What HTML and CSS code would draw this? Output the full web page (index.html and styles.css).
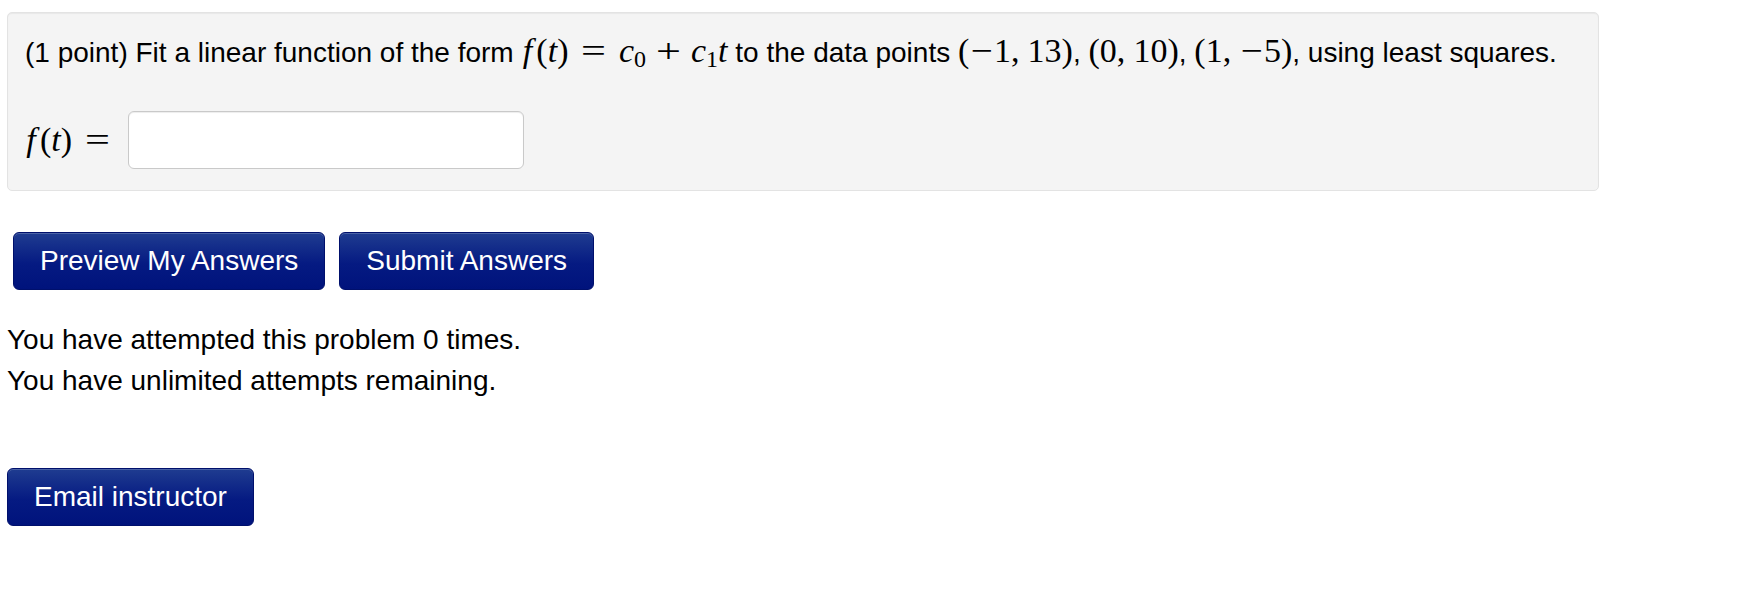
FILE: index.html
```html
<!DOCTYPE html>
<html lang="en">
<head>
  <meta charset="UTF-8" />
  <meta name="viewport" content="width=device-width, initial-scale=1.0"/>
  <title>Problem 1</title>
  <link rel="stylesheet" href="styles.css">
</head>
<body>
  <div class="page">
    <div class="problem">
      <p class="statement">(1 point) Fit a linear function of the form <span class="math"><i class="fn">f</i>(<i>t</i>)<span class="rel">=</span><i>c</i><sub>0</sub><span class="bin">+</span><i>c</i><sub>1</sub><i>t</i></span> to the data points <span class="math">(<span class="neg">−</span>1,<span class="thin"></span>13)</span>, <span class="math">(0,<span class="thin"></span>10)</span>, <span class="math">(1,<span class="thin"></span><span class="neg">−</span>5)</span>, using least squares.</p>
      <div class="answer-row">
        <span class="math"><i class="fn">f</i>(<i>t</i>)<span class="rel last">=</span></span>
        <input type="text" class="answer" aria-label="f(t)">
      </div>
    </div>

    <div class="actions">
      <button class="btn">Preview My Answers</button>
      <button class="btn">Submit Answers</button>
    </div>

    <div class="attempts">
      <p>You have attempted this problem 0 times.</p>
      <p>You have unlimited attempts remaining.</p>
    </div>

    <div class="email">
      <button class="btn">Email instructor</button>
    </div>
  </div>
</body>
</html>
```

FILE: styles.css
```css
body {
  margin: 0;
  background: #fff;
  color: #000;
  font-family: "Liberation Sans", Helvetica, Arial, sans-serif;
  font-size: 28px;
}
.page { padding: 12px 0 0 7px; }

.problem {
  box-sizing: border-box;
  width: 1592px;
  padding: 17px 18px 21px 17px;
  background: #f4f4f4;
  border: 1px solid #e3e3e3;
  border-radius: 5px;
  box-shadow: inset 0 1px 1px rgba(0, 0, 0, 0.05);
}
.statement { margin: 0; line-height: 41px; white-space: nowrap; }

/* typeset maths, roughly TeX spacing */
.math {
  font-family: "Liberation Serif", "Times New Roman", serif;
  font-size: 34px;
  white-space: nowrap;
}
.math i { font-style: italic; }
.math .fn { margin: 0 0.12em 0 0.04em; }
.math sub {
  font-size: 0.707em;
  vertical-align: -0.2em;
  line-height: 0;
}
.rel, .bin, .neg {
  display: inline-block;
  transform: scaleX(1.3);
}
.rel { margin: 0 0.46em; }
.rel.last { margin-right: 0.1em; }
.bin { margin: 0 0.38em; }
.neg { margin: 0 0.08em; transform: scaleX(1.15); }
.thin { display: inline-block; width: 0.24em; }

.answer-row {
  display: flex;
  align-items: center;
  gap: 18px;
  margin-top: 38px;
  height: 58px;
}
.answer {
  box-sizing: border-box;
  width: 396px;
  height: 58px;
  margin: 0;
  background: #fff;
  border: 1px solid #c9c9c9;
  border-radius: 6px;
  box-shadow: inset 0 1px 1px rgba(0, 0, 0, 0.075);
}

.btn {
  box-sizing: border-box;
  height: 58px;
  margin: 0;
  padding: 0 26px;
  font-family: inherit;
  font-size: 28px;
  color: #fff;
  background: linear-gradient(#1f3c90, #051a82 55%, #00137c);
  border: 1px solid #00106c;
  border-radius: 6px;
  box-shadow: inset 0 1px 0 rgba(255, 255, 255, 0.2);
  cursor: pointer;
}
.actions { display: flex; gap: 14px; margin: 41px 0 0 6px; }

.attempts { margin-top: 29px; line-height: 41px; }
.attempts p { margin: 0; }

.email { margin-top: 67px; }
```
